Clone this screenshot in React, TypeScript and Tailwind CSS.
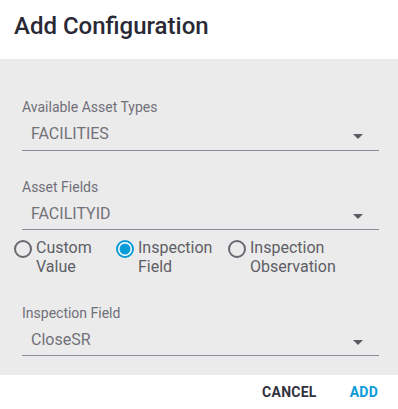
import React from "react";

const Caret = () => (
  <svg width="10" height="5" viewBox="0 0 10 5" className="absolute right-[16px] top-[12px]">
    <path d="M0 0 L10 0 L5 5 Z" fill="#5a5a62" />
  </svg>
);

function Field({ label, value, mt, pb }: { label: string; value: string; mt: string; pb: string }) {
  return (
    <div className={mt}>
      <div className="h-[16px] text-[14px] leading-[16px] text-[#707079]">{label}</div>
      <div className={`relative mt-[7px] border-b border-[#8e8c98] ${pb}`}>
        <div className="h-[24px] pl-[9px] text-[16px] leading-[24px] text-[#727179]">{value}</div>
        <Caret />
      </div>
    </div>
  );
}

function Radio({ checked, l1, l2, w }: { checked?: boolean; l1: string; l2: string; w: string }) {
  return (
    <div className={`flex items-start ${w}`}>
      <svg width="18" height="18" viewBox="0 0 18 18" className="mt-[2px] shrink-0">
        <circle cx="9" cy="9" r="8" fill={checked ? "#ffffff" : "none"} stroke={checked ? "#0a9bd9" : "#6a6972"} strokeWidth="2" />
        {checked && <circle cx="9" cy="9" r="5.5" fill="#0a9bd9" />}
      </svg>
      <div className="ml-[4px] text-[16px] leading-[19px] text-[#5f5e66]">
        <div>{l1}</div>
        <div>{l2}</div>
      </div>
    </div>
  );
}

export default function App() {
  return (
    <div className="w-[398px] h-[409px] bg-white" style={{ fontFamily: "Roboto, 'Noto Sans', sans-serif" }}>
      <div className="h-[59px] pl-[14px] pt-[12px]">
        <div className="text-[24px] leading-[28px] font-medium text-[#2a2936]">Add Configuration</div>
      </div>
      <div className="h-[316px] bg-[#ebebeb] pl-[22px] pr-[19px] pt-[40px]">
        <Field label="Available Asset Types" value="FACILITIES" mt="" pb="pb-[4px]" />
        <Field label="Asset Fields" value="FACILITYID" mt="mt-[28px]" pb="pb-[3px]" />
        <div className="-ml-[8px] mt-[8px] flex">
          <Radio l1="Custom" l2="Value" w="w-[102px]" />
          <Radio checked l1="Inspection" l2="Field" w="w-[112px]" />
          <Radio l1="Inspection" l2="Observation" w="" />
        </div>
        <Field label="Inspection Field" value="CloseSR" mt="mt-[29px]" pb="pb-[3px]" />
      </div>
      <div className="flex h-[34px] items-center justify-end pr-[20px]">
        <div className="text-[14px] font-bold tracking-[0.25px] text-[#33323e]">CANCEL</div>
        <div className="ml-[33px] text-[14px] font-bold tracking-[0.25px] text-[#0a9bd9]">ADD</div>
      </div>
    </div>
  );
}
